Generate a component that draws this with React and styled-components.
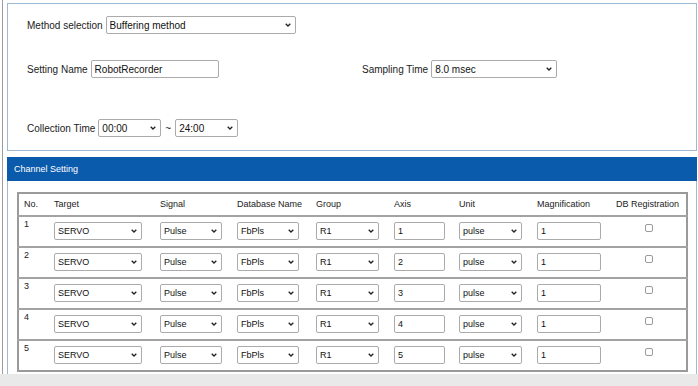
import React from 'react';
import styled, { createGlobalStyle } from 'styled-components';

const GlobalStyle = createGlobalStyle`
  html, body {
    margin: 0;
    padding: 0;
    background: #fff;
  }
  body {
    font-family: "Liberation Sans", Arial, sans-serif;
    color: #222;
  }
`;

const Frame = styled.div`
  height: 386px;
  display: flex;
  flex-direction: column;
  overflow: hidden;
`;

const Viewport = styled.div`
  flex: 1 1 0;
  min-height: 0;
  overflow: hidden;
  margin-left: 2px;
  border-left: 1px solid #9d9d9d;
  padding: 3px 1px 0 4px;
`;

const ScrollTrack = styled.div`
  flex: 0 0 12px;
  height: 12px;
  background: #e9e9e9;
`;

const TopPanel = styled.div`
  box-sizing: border-box;
  height: 148px;
  border: 1px solid #9cb9d8;
  padding: 12px 0 0 19px;
`;

const FieldRow = styled.div`
  display: grid;
  grid-template-columns: ${(p) => (p.$split ? '335px 1fr' : '1fr')};
  margin-top: ${(p) => p.$gap || 0}px;
  height: 18px;
  align-items: center;
`;

const Field = styled.div`
  display: flex;
  align-items: center;
  gap: 3px;
`;

const Label = styled.span`
  font-size: 10px;
  color: #222;
  white-space: nowrap;
`;

const SelectWrap = styled.span`
  position: relative;
  display: inline-flex;
  width: ${(p) => p.$w}px;
  height: 18px;
`;

const NativeSelect = styled.select`
  appearance: none;
  -webkit-appearance: none;
  width: 100%;
  height: 18px;
  box-sizing: border-box;
  font-family: "Liberation Sans", Arial, sans-serif;
  font-size: ${(p) => p.$fs}px;
  color: #111;
  background: #fff;
  border: 1px solid #ababab;
  border-radius: 2px;
  padding: 0 12px 0 3px;
  margin: 0;
  outline: none;
`;

const Chevron = styled.svg`
  position: absolute;
  right: 5px;
  top: 7px;
  width: 6px;
  height: 4px;
  pointer-events: none;
`;

const Select = ({ w, fs = 10, value }) => (
  <SelectWrap $w={w}>
    <NativeSelect $fs={fs} defaultValue={value}>
      <option>{value}</option>
    </NativeSelect>
    <Chevron viewBox="0 0 6 4">
      <path d="M0.7 0.7 L3 3 L5.3 0.7" fill="none" stroke="#222" strokeWidth="1.3" />
    </Chevron>
  </SelectWrap>
);

const TextInput = styled.input`
  width: ${(p) => p.$w}px;
  height: 18px;
  box-sizing: border-box;
  font-family: "Liberation Sans", Arial, sans-serif;
  font-size: ${(p) => p.$fs || 10}px;
  color: #111;
  border: 1px solid #ababab;
  border-radius: 2px;
  padding: 0 3px;
  margin: 0;
  outline: none;
`;

const Tilde = styled.span`
  font-size: 10px;
  margin: 0 1px;
`;

const ChannelHeader = styled.div`
  margin-top: 6px;
  height: 24px;
  background: #0a5bab;
  color: #fff;
  font-size: 9px;
  display: flex;
  align-items: center;
  padding-left: 7px;
`;

const ChannelBody = styled.div`
  border-left: 1px solid #9cb9d8;
  border-right: 1px solid #9cb9d8;
  padding: 11px 8px 20px 9px;
`;

const Table = styled.table`
  width: 671px;
  table-layout: fixed;
  border-collapse: collapse;
  border: 2px solid #9a9a9a;
  font-size: 9px;
  color: #222;
`;

const HeadCell = styled.th`
  text-align: left;
  font-weight: normal;
  padding: 5px 5px 5px;
  line-height: 11px;
  white-space: nowrap;
`;

const Row = styled.tr`
  border-top: 2px solid #a3a3a3;
`;

const Cell = styled.td`
  padding: 5px 5px 6px;
  vertical-align: top;
  line-height: 11px;
  text-align: ${(p) => (p.$center ? 'center' : 'left')};
`;

const NumCell = styled(Cell)`
  padding-top: 2px;
`;

const Check = styled.input`
  appearance: none;
  -webkit-appearance: none;
  box-sizing: border-box;
  width: 8px;
  height: 8px;
  margin: 2px 0 0;
  border: 1px solid #9a9a9a;
  border-radius: 2px;
  background: #fff;
`;

const columns = [31, 106, 77, 79, 78, 65, 78, 79, 76];
const headers = ['No.', 'Target', 'Signal', 'Database Name', 'Group', 'Axis', 'Unit', 'Magnification', 'DB Registration'];
const channels = [1, 2, 3, 4, 5];

const ChannelRow = ({ no }) => (
  <Row>
    <NumCell>{no}</NumCell>
    <Cell>
      <Select w={88} fs={9} value="SERVO" />
    </Cell>
    <Cell>
      <Select w={62} fs={9} value="Pulse" />
    </Cell>
    <Cell>
      <Select w={62} fs={9} value="FbPls" />
    </Cell>
    <Cell>
      <Select w={63} fs={9} value="R1" />
    </Cell>
    <Cell>
      <TextInput $w={51} $fs={9} defaultValue={String(no)} />
    </Cell>
    <Cell>
      <Select w={63} fs={9} value="pulse" />
    </Cell>
    <Cell>
      <TextInput $w={64} $fs={9} defaultValue="1" />
    </Cell>
    <Cell $center>
      <Check type="checkbox" />
    </Cell>
  </Row>
);

export default function App() {
  return (
    <Frame>
      <GlobalStyle />
      <Viewport>
        <TopPanel>
          <FieldRow>
            <Field>
              <Label>Method selection</Label>
              <Select w={190} value="Buffering method" />
            </Field>
          </FieldRow>
          <FieldRow $split $gap={26}>
            <Field>
              <Label>Setting Name</Label>
              <TextInput $w={128} defaultValue="RobotRecorder" />
            </Field>
            <Field>
              <Label>Sampling Time</Label>
              <Select w={126} value="8.0 msec" />
            </Field>
          </FieldRow>
          <FieldRow $gap={41}>
            <Field>
              <Label>Collection Time</Label>
              <Select w={63} value="00:00" />
              <Tilde>~</Tilde>
              <Select w={63} value="24:00" />
            </Field>
          </FieldRow>
        </TopPanel>
        <ChannelHeader>Channel Setting</ChannelHeader>
        <ChannelBody>
          <Table>
            <colgroup>
              {columns.map((w, i) => (
                <col key={i} style={{ width: w }} />
              ))}
            </colgroup>
            <thead>
              <tr>
                {headers.map((h) => (
                  <HeadCell key={h}>{h}</HeadCell>
                ))}
              </tr>
            </thead>
            <tbody>
              {channels.map((n) => (
                <ChannelRow key={n} no={n} />
              ))}
            </tbody>
          </Table>
        </ChannelBody>
      </Viewport>
      <ScrollTrack />
    </Frame>
  );
}
